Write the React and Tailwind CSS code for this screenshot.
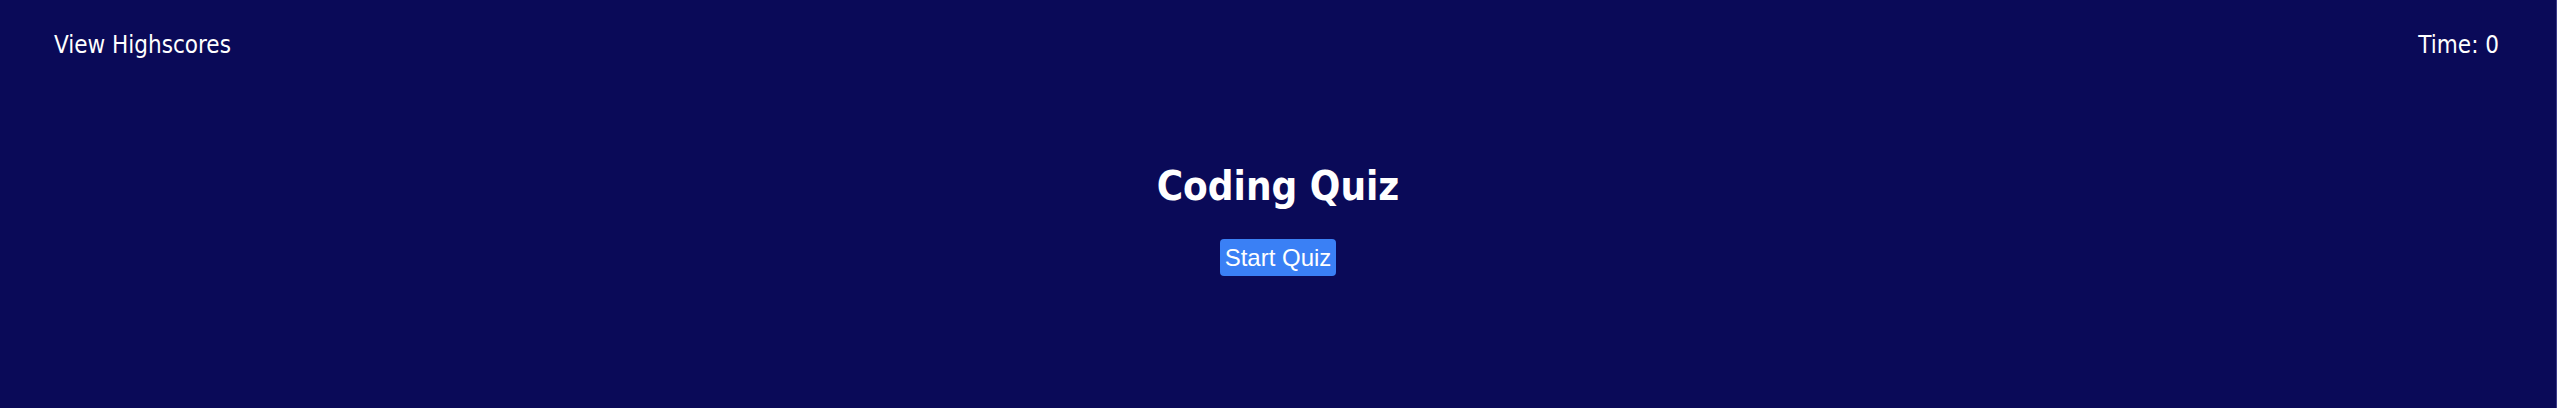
import React, { useState } from "react";

const tahomaLike = { fontFamily: '"DejaVu Sans Condensed", "DejaVu Sans", sans-serif' };

export default function App() {
  const [time] = useState(0);

  return (
    <div
      className="h-[408px] w-full bg-[#0a0a58] text-white border-r border-[#3c3c8a] overflow-hidden"
      style={tahomaLike}
    >
      {/* Header */}
      <header className="flex justify-between items-center pl-[54px] pr-[57px] pt-[31px] text-[24px] leading-[28px]">
        <a href="#" className="text-white">View Highscores</a>
        <span>Time: {time}</span>
      </header>

      {/* Start screen */}
      <main className="flex flex-col items-center mt-[102px]">
        <h1 className="text-[40px] leading-[50px] font-bold">Coding Quiz</h1>
        <button
          className="mt-[28px] bg-[#3a80f5] text-white text-[24px] leading-[27px] px-[5px] py-[5px] rounded-[4px]"
          style={{ fontFamily: '"Liberation Sans", Arial, sans-serif' }}
        >
          Start Quiz
        </button>
      </main>
    </div>
  );
}
